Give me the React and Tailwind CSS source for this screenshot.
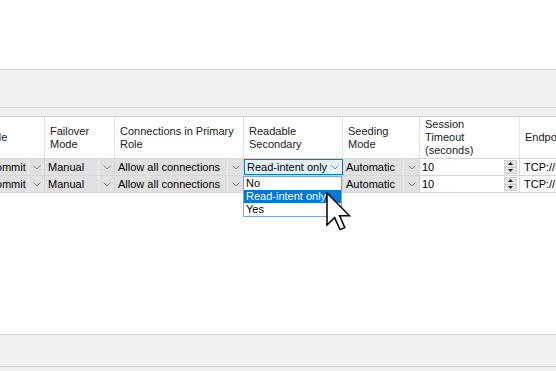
import React from "react";

const Chevron = () => (
  <svg width="8" height="5" viewBox="0 0 8 5" className="block">
    <path d="M0.5 0.5 L4 4 L7.5 0.5" fill="none" stroke="#8a8a8a" strokeWidth="1" />
  </svg>
);

const Combo = ({ width, text, open }) => (
  <div
    className={`flex h-full shrink-0 border-r border-[#d6d6d6] ${width} ${
      open ? "bg-[#e5f1fb] outline outline-1 -outline-offset-1 outline-[#0078d7]" : "bg-[#e1e1e1]"
    }`}
  >
    <span className="flex-1 overflow-hidden whitespace-nowrap pl-[3px] leading-[16px] text-black">{text}</span>
    <span
      className={`flex shrink-0 items-center justify-center ${
        open ? "w-[13px] pr-[2px]" : "w-[16px] border-l border-[#ececec]"
      }`}
    >
      <Chevron />
    </span>
  </div>
);

const Spin = () => (
  <div className="my-[1px] mr-[2px] flex w-[13px] flex-col border border-[#d0d0d0] bg-[#e6e6e6]">
    <div className="flex flex-1 items-center justify-center border-b border-[#c8c8c8]">
      <svg width="5" height="3" viewBox="0 0 5 3"><path d="M0 3 L2.5 0 L5 3 Z" fill="#222" /></svg>
    </div>
    <div className="flex flex-1 items-center justify-center">
      <svg width="5" height="3" viewBox="0 0 5 3"><path d="M0 0 L2.5 3 L5 0 Z" fill="#222" /></svg>
    </div>
  </div>
);

const Row = ({ open }) => (
  <div className="flex h-[17px] border-b border-[#d6d6d6]">
    <Combo width="w-[125px]" text="Synchronous commit" />
    <Combo width="w-[70px]" text="Manual" />
    <Combo width="w-[129px]" text="Allow all connections" />
    {open ? (
      <Combo width="w-[99px]" text="Read-intent only" open />
    ) : (
      <div className="h-full w-[99px] shrink-0 border-r border-[#d6d6d6]" />
    )}
    <Combo width="w-[77px]" text="Automatic" />
    <div className="flex h-full w-[100px] shrink-0 border-r border-[#d6d6d6] bg-white">
      <span className="flex-1 pl-[2px] leading-[16px] text-black">10</span>
      <Spin />
    </div>
    <div className="w-[140px] shrink-0 overflow-hidden whitespace-nowrap pl-[4px] leading-[16px] text-black">
      TCP://MSSQL02.corp.contoso.com:5022
    </div>
  </div>
);

const Head = ({ width, children }) => (
  <div className={`flex h-full shrink-0 items-center border-r border-[#e4e4e4] pl-[5px] pr-[3px] leading-[13px] text-[#1a1a1a] ${width}`}>
    <span>{children}</span>
  </div>
);

export default function App() {
  return (
    <div className="relative flex h-[371px] w-[556px] flex-col overflow-hidden bg-white font-['Liberation_Sans',Arial,sans-serif] text-[11px]">
      <div className="h-[69px] shrink-0" />
      <div className="h-[38px] shrink-0 border-t border-[#d3d3d3] bg-[#f0f0f0]" />
      <div className="h-[9px] shrink-0 border-t border-[#d3d3d3] bg-[#f0f0f0]" />

      {/* grid */}
      <div className="ml-[-80px] flex flex-col border-t border-[#cfcfcf]">
        <div className="flex h-[42px] border-b border-[#d6d6d6]">
          <Head width="w-[125px]">Availability Mode</Head>
          <Head width="w-[70px]">Failover<br />Mode</Head>
          <Head width="w-[129px]">Connections in Primary<br />Role</Head>
          <Head width="w-[99px]">Readable<br />Secondary</Head>
          <Head width="w-[77px]">Seeding<br />Mode</Head>
          <Head width="w-[100px]">Session<br />Timeout<br />(seconds)</Head>
          <Head width="w-[140px]">Endpoint URL</Head>
        </div>
        <Row open />
        <Row />
      </div>

      <div className="flex-1" />
      <div className="h-[32px] shrink-0 border-t border-[#d3d3d3] bg-[#f0f0f0]" />
      <div className="h-[5px] shrink-0 border-t border-[#d3d3d3] bg-[#f0f0f0]" />

      {/* open dropdown list */}
      <div className="absolute left-[243px] top-[176px] flex w-[99px] flex-col border border-[#7aa6d6] bg-white leading-[13px] text-black">
        <div className="h-[13px] pl-[2px]">No</div>
        <div className="h-[13px] bg-[#0078d7] pl-[2px] text-white">Read-intent only</div>
        <div className="h-[13px] pl-[2px]">Yes</div>
      </div>

      {/* mouse pointer */}
      <svg className="absolute left-[326px] top-[192px]" width="25" height="39" viewBox="0 0 12.5 19.5">
        <path
          d="M0.5 0.5 L0.5 16.5 L4.3 12.8 L7 18.8 L9.4 17.8 L6.8 11.9 L11.8 11.9 Z"
          fill="#fff"
          stroke="#000"
          strokeWidth="0.75"
          strokeLinejoin="miter"
        />
      </svg>
    </div>
  );
}
